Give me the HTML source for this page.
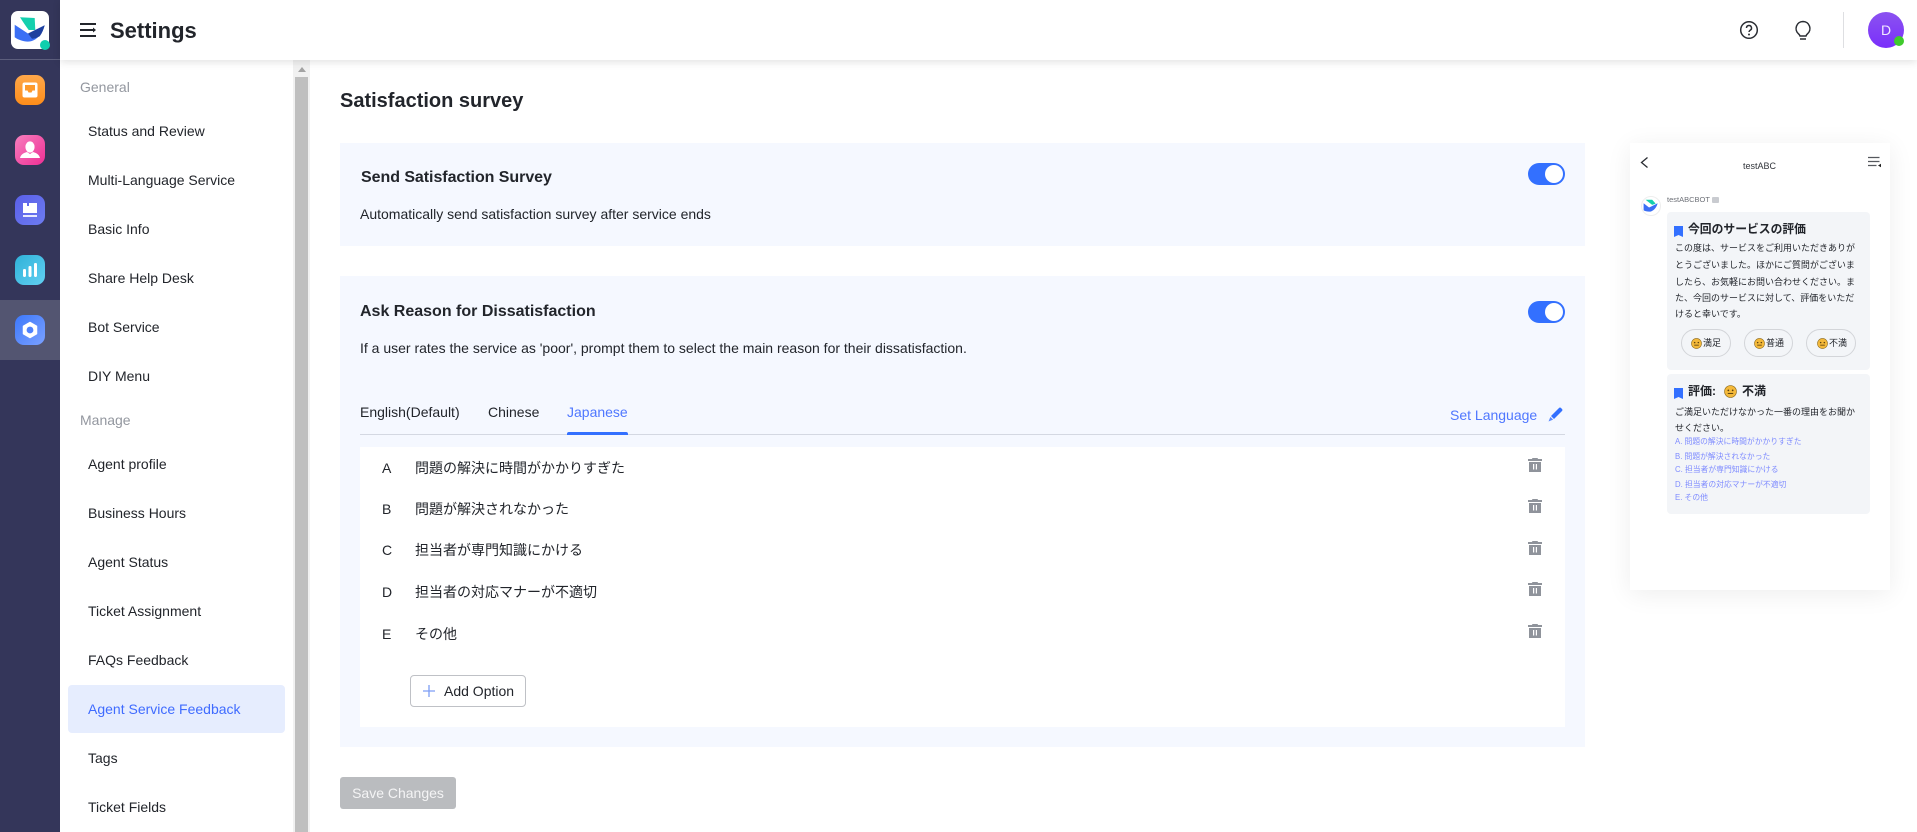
<!DOCTYPE html>
<html><head><meta charset="utf-8"><title>Settings</title>
<style>
*{box-sizing:border-box}
html,body{margin:0;padding:0;width:1917px;height:832px;overflow:hidden;background:#fff;font-family:"Liberation Sans","Noto Sans CJK JP",sans-serif;color:#22252b}
.a{position:absolute;white-space:nowrap}
.m{position:absolute;left:88px;font-size:14px;line-height:20px;color:#22252b;white-space:nowrap}
.g{position:absolute;left:80px;font-size:14px;line-height:20px;color:#93979f}
.ico{position:absolute;left:15px;width:30px;height:30px;border-radius:9px}
.l{position:absolute;left:382px;font-size:14px;line-height:20px;color:#22252b}
.t{position:absolute;left:415px;font-size:14px;line-height:20px;color:#22252b;white-space:nowrap}
.tog{position:absolute;left:1528px;width:37px;height:22px;border-radius:11px;background:#3370ff}
.tog:after{content:"";position:absolute;right:2px;top:2px;width:18px;height:18px;border-radius:50%;background:#fff}
.tr{position:absolute;left:1528px;width:14px;height:14px}
.j{font-size:9px;line-height:16px;position:absolute;color:#22252b;white-space:nowrap}
.o{font-size:7.800px;line-height:12px;position:absolute;color:#7f8cff;white-space:nowrap}
.pill{position:absolute;top:329px;width:50px;height:28px;border:1px solid #d3d5d9;border-radius:14px}
</style></head><body>
<div class="a" style="left:0;top:0;width:60px;height:832px;background:#34365a"></div>
<div class="a" style="left:0;top:59px;width:60px;height:1px;background:#5c5e7c"></div>
<div class="a" style="left:11px;top:11px;width:38px;height:38px;background:#fff;border-radius:7px"></div>
<svg class="a" style="left:11px;top:11px" width="40" height="40" viewBox="0 0 40 40"><path d="M9 6.300L23.700 7l.6 12h-6.600C14.500 15 11.500 10 9 6.300z" fill="#14cfae"/><path d="M3.700 13.700L17.700 23l16-8.700C31 23 26 29 20 30.300c-5.500 1-11.500-.6-16.300-4z" fill="#3b6ff5"/><path d="M17 22.500l16.700-8.200c-1 4-2.700 8-5 11-2.500 1.500-5 2.200-7.700 2.500z" fill="#1d3f9f"/></svg>
<div class="a" style="left:40px;top:40px;width:10px;height:10px;border-radius:50%;background:#0fcfae"></div>
<div class="a" style="left:0;top:300px;width:60px;height:60px;background:#535571"></div>
<div class="ico" style="top:75px;background:linear-gradient(#ffa84a,#fd8d1a)"></div>
<svg class="a" style="left:22px;top:82px" width="16" height="16" viewBox="0 0 16 16"><rect x=".500" y=".500" width="15" height="15" rx="2" fill="#fff"/><path d="M3 3h10v5.500h-2.500L9.500 10.500h-3L5.500 8.500H3z" fill="#fd9a2e"/></svg>
<div class="ico" style="top:135px;background:linear-gradient(135deg,#f77fbe,#ee2f95)"></div>
<svg class="a" style="left:20px;top:141px" width="20" height="18" viewBox="0 0 20 18"><ellipse cx="10" cy="6" rx="4.600" ry="5.600" fill="#fff"/><path d="M0 17c1-4 4-5 7-6l3 2 3-2c3 1 6 2 7 6z" fill="#fff"/></svg>
<div class="ico" style="top:195px;background:linear-gradient(135deg,#5a5fe8,#6d7cf0)"></div>
<svg class="a" style="left:22px;top:202px" width="16" height="16" viewBox="0 0 16 16"><path d="M1 1h4v3h2V1h8v10H1z" fill="#fff"/><path d="M1 13h14v2H1z" fill="#e8eaff"/></svg>
<div class="ico" style="top:255px;background:linear-gradient(135deg,#2fb1d8,#62d0f2)"></div>
<svg class="a" style="left:22px;top:262px" width="16" height="16" viewBox="0 0 16 16"><rect x="1" y="7" width="3" height="8" rx="1.200" fill="#fff"/><rect x="6.500" y="4" width="3" height="11" rx="1.200" fill="#fff"/><rect x="12" y="1" width="3" height="14" rx="1.200" fill="#fff"/></svg>
<div class="ico" style="top:315px;background:linear-gradient(135deg,#3d78fb,#7aa0ff)"></div>
<svg class="a" style="left:21px;top:321px" width="18" height="18" viewBox="0 0 18 18"><path d="M9 1.500l6.500 3.750v7.500L9 16.500l-6.500-3.750v-7.500z" fill="#fff" stroke="#fff" stroke-width="1.500" stroke-linejoin="round"/><circle cx="9" cy="9" r="3.400" fill="#4f82fc"/></svg>

<div class="a" style="left:60px;top:0;width:1857px;height:60px;background:#fff;box-shadow:0 2px 8px rgba(0,0,0,.12);z-index:5"></div>
<svg class="a" style="left:80px;top:23px;z-index:6" width="16" height="15" viewBox="0 0 16 15"><path d="M0 1h16M0 7h14M0 13h16" stroke="#22252b" stroke-width="2"/><path d="M13 4.500L16 7l-3 2.500z" fill="#22252b"/></svg>
<div class="a" style="left:110px;top:17px;font-size:22px;line-height:28px;font-weight:700;color:#22252b;z-index:6">Settings</div>
<svg class="a" style="left:1739px;top:20px;z-index:6" width="20" height="20" viewBox="0 0 20 20"><circle cx="10" cy="10" r="8.300" fill="none" stroke="#2a2d33" stroke-width="1.500"/><path d="M7.500 8a2.500 2.500 0 1 1 3.700 2.200c-.8.500-1.200 1-1.200 1.800" fill="none" stroke="#2a2d33" stroke-width="1.500"/><circle cx="10" cy="14.500" r="1" fill="#2a2d33"/></svg>
<svg class="a" style="left:1794px;top:20px;z-index:6" width="18" height="21" viewBox="0 0 18 21"><path d="M9 1.500a7 7 0 0 0-4.500 12.300c.8.700 1.200 1.300 1.500 2.200h6c.3-.9.700-1.500 1.500-2.200A7 7 0 0 0 9 1.500z" fill="none" stroke="#2a2d33" stroke-width="1.500"/><path d="M6 19h6" stroke="#2a2d33" stroke-width="1.500"/></svg>
<div class="a" style="left:1843px;top:12px;width:1px;height:36px;background:#dedfe2;z-index:6"></div>
<div class="a" style="left:1868px;top:12px;width:36px;height:36px;border-radius:50%;background:linear-gradient(#8b52f0,#7a2ffb);color:#f1e8ff;font-size:14px;line-height:36px;text-align:center;z-index:6">D</div>
<div class="a" style="left:1894px;top:36px;width:10px;height:10px;border-radius:50%;background:#3fca2c;z-index:7"></div>

<div class="g" style="top:77px">General</div>
<div class="m" style="top:121px">Status and Review</div>
<div class="m" style="top:170px">Multi-Language Service</div>
<div class="m" style="top:219px">Basic Info</div>
<div class="m" style="top:268px">Share Help Desk</div>
<div class="m" style="top:317px">Bot Service</div>
<div class="m" style="top:366px">DIY Menu</div>
<div class="g" style="top:410px">Manage</div>
<div class="m" style="top:454px">Agent profile</div>
<div class="m" style="top:503px">Business Hours</div>
<div class="m" style="top:552px">Agent Status</div>
<div class="m" style="top:601px">Ticket Assignment</div>
<div class="m" style="top:650px">FAQs Feedback</div>
<div class="a" style="left:68px;top:685px;width:217px;height:48px;background:#e6edfe;border-radius:4px"></div>
<div class="m" style="top:699px;color:#3f6bff">Agent Service Feedback</div>
<div class="m" style="top:748px">Tags</div>
<div class="m" style="top:797px">Ticket Fields</div>

<div class="a" style="left:293px;top:60px;width:17px;height:772px;background:#f1f1f1"></div>
<div class="a" style="left:295px;top:77px;width:13px;height:755px;background:#bfbfbf"></div>
<div class="a" style="left:298px;top:67px;width:0;height:0;border:4px solid transparent;border-top:0;border-bottom:5px solid #a3a3a3"></div>

<div class="a" style="left:340px;top:89px;font-size:20px;line-height:24px;font-weight:700;color:#22252b">Satisfaction survey</div>

<div class="a" style="left:340px;top:143px;width:1245px;height:103px;background:#f5f8ff"></div>
<div class="a" style="left:361px;top:168px;font-size:16px;line-height:20px;font-weight:700;letter-spacing:-.05px">Send Satisfaction Survey</div>
<div class="tog" style="top:163px"></div>
<div class="a" style="left:360px;top:204px;font-size:14px;line-height:20px">Automatically send satisfaction survey after service ends</div>

<div class="a" style="left:340px;top:276px;width:1245px;height:471px;background:#f5f8ff"></div>
<div class="a" style="left:360px;top:302px;font-size:16px;line-height:20px;font-weight:700">Ask Reason for Dissatisfaction</div>
<div class="tog" style="top:301px"></div>
<div class="a" style="left:360px;top:338px;font-size:14px;line-height:20px">If a user rates the service as 'poor', prompt them to select the main reason for their dissatisfaction.</div>

<div class="a" style="left:360px;top:402px;font-size:14px;line-height:20px">English(Default)</div>
<div class="a" style="left:488px;top:402px;font-size:14px;line-height:20px">Chinese</div>
<div class="a" style="left:567px;top:402px;font-size:14px;line-height:20px;color:#4f77ff">Japanese</div>
<div class="a" style="left:360px;top:434px;width:1205px;height:1px;background:#d4d8e2"></div>
<div class="a" style="left:567px;top:432px;width:61px;height:3px;background:#3370ff;border-radius:2px 2px 0 0"></div>
<div class="a" style="left:1450px;top:405px;font-size:14px;line-height:20px;color:#4f77ff">Set Language</div>
<svg class="a" style="left:1548px;top:407px" width="15" height="15" viewBox="0 0 15 15"><path d="M3 9L11 1c.6-.6 1.400-.6 2 0l1 1c.6.6.6 1.400 0 2L6 12z" fill="#3370ff"/><path d="M.5 14.500l1.900-4.600 2.700 2.700z" fill="#5a8bff"/></svg>

<div class="a" style="left:360px;top:447px;width:1205px;height:280px;background:#fff"></div>
<div class="l" style="top:458px">A</div><div class="t" style="top:458px">問題の解決に時間がかかりすぎた</div>
<div class="l" style="top:499px">B</div><div class="t" style="top:499px">問題が解決されなかった</div>
<div class="l" style="top:540px">C</div><div class="t" style="top:540px">担当者が専門知識にかける</div>
<div class="l" style="top:582px">D</div><div class="t" style="top:582px">担当者の対応マナーが不適切</div>
<div class="l" style="top:624px">E</div><div class="t" style="top:624px">その他</div>
<svg width="0" height="0" style="position:absolute"><symbol id="tr" viewBox="0 0 14 14"><path d="M4.500 0h5l.6 1H14v2H0V1h3.900zM1 4h12v10H1z" fill="#8f939b"/><path d="M5 6h1.200v5.500H5zM7.800 6H9v5.500H7.800z" fill="#fff"/></symbol></svg>
<svg class="tr" style="top:458px"><use href="#tr"/></svg>
<svg class="tr" style="top:499px"><use href="#tr"/></svg>
<svg class="tr" style="top:541px"><use href="#tr"/></svg>
<svg class="tr" style="top:582px"><use href="#tr"/></svg>
<svg class="tr" style="top:624px"><use href="#tr"/></svg>

<div class="a" style="left:410px;top:675px;width:116px;height:32px;background:#fff;border:1px solid #bfc1c6;border-radius:4px"></div>
<svg class="a" style="left:422px;top:684px" width="14" height="14" viewBox="0 0 14 14"><path d="M7 1v12M1 7h12" stroke="#7d9df5" stroke-width="1.300"/></svg>
<div class="a" style="left:444px;top:681px;font-size:14px;line-height:20px">Add Option</div>

<div class="a" style="left:340px;top:777px;width:116px;height:32px;background:#babcbf;border-radius:3px;color:#f4f4f5;font-size:14px;line-height:32px;text-align:center">Save Changes</div>

<div class="a" style="left:1630px;top:143px;width:260px;height:447px;background:#fff;box-shadow:0 4px 24px rgba(0,0,0,.07)"></div>
<svg class="a" style="left:1640px;top:157px" width="9" height="11" viewBox="0 0 9 11"><path d="M7.500 .5L1.500 5.500l6 5" fill="none" stroke="#2a2d33" stroke-width="1.300"/></svg>
<div class="a" style="left:1743px;top:159px;font-size:9px;line-height:14px;color:#33363c">testABC</div>
<svg class="a" style="left:1868px;top:156px" width="14" height="12" viewBox="0 0 14 12"><path d="M0 1.500h11.500M0 5.500h11.500M0 9.500h8.500" stroke="#55585e" stroke-width="1.300"/><path d="M10 9.500l3-1.800v3.600z" fill="#222"/></svg>
<div class="a" style="left:1641px;top:196px;width:20px;height:20px;border-radius:50%;background:#fff;border:1px solid #eee"></div>
<svg class="a" style="left:1643px;top:199px" width="16" height="14" viewBox="0 0 40 36"><path d="M6 2h17l9 10-9 3z" fill="#14cfae"/><path d="M1 11l14 11 22-11c-2 10-9 18-17 21-6 1-15 0-19-3z" fill="#3b6ff5"/></svg>
<div class="a" style="left:1667px;top:194px;font-size:7.500px;line-height:12px;color:#6e7178">testABCBOT</div>
<div class="a" style="left:1712px;top:197px;width:7px;height:6px;border-radius:1px;background:#c9cbd0"></div>
<div class="a" style="left:1667px;top:212px;width:203px;height:158px;background:#f3f5f8;border-radius:4px"></div>
<svg class="a" style="left:1674px;top:226px" width="9" height="11" viewBox="0 0 9 11"><path d="M0 0h9v11L4.500 9 0 11z" fill="#3370ff"/></svg>
<div class="a" style="left:1688px;top:221px;font-size:11.800px;line-height:17px;font-weight:700;color:#22252b">今回のサービスの評価</div>
<div class="j" style="left:1675px;top:240px">この度は、サービスをご利用いただきありが</div>
<div class="j" style="left:1675px;top:257px">とうございました。ほかにご質問がございま</div>
<div class="j" style="left:1675px;top:274px">したら、お気軽にお問い合わせください。ま</div>
<div class="j" style="left:1675px;top:290px">た、今回のサービスに対して、評価をいただ</div>
<div class="j" style="left:1675px;top:306px">けると幸いです。</div>
<div class="pill" style="left:1681px"></div><div class="pill" style="left:1744px;width:49px"></div><div class="pill" style="left:1806px"></div>
<svg width="0" height="0" style="position:absolute"><symbol id="fa" viewBox="0 0 12 12"><circle cx="6" cy="6" r="5.500" fill="#f4b93a" stroke="#8d6a1c" stroke-width=".6"/><circle cx="4" cy="5" r=".8" fill="#5a4010"/><circle cx="8" cy="5" r=".8" fill="#5a4010"/><path d="M3.500 7.800h5" stroke="#5a4010" stroke-width=".9"/></symbol></svg>
<svg class="a" style="left:1691px;top:338px" width="11" height="11" viewBox="0 0 12 12"><use href="#fa"/></svg>
<div class="j" style="left:1703px;top:335px">満足</div>
<svg class="a" style="left:1754px;top:338px" width="11" height="11" viewBox="0 0 12 12"><use href="#fa"/></svg>
<div class="j" style="left:1766px;top:335px">普通</div>
<svg class="a" style="left:1817px;top:338px" width="11" height="11" viewBox="0 0 12 12"><use href="#fa"/></svg>
<div class="j" style="left:1829px;top:335px">不満</div>
<div class="a" style="left:1667px;top:374px;width:203px;height:140px;background:#f3f5f8;border-radius:4px"></div>
<svg class="a" style="left:1674px;top:388px" width="9" height="11" viewBox="0 0 9 11"><path d="M0 0h9v11L4.500 9 0 11z" fill="#3370ff"/></svg>
<div class="a" style="left:1688px;top:383px;font-size:12px;line-height:17px;font-weight:700;color:#22252b">評価:</div>
<svg class="a" style="left:1724px;top:385px" width="13" height="13" viewBox="0 0 12 12"><use href="#fa"/></svg>
<div class="a" style="left:1742px;top:383px;font-size:12px;line-height:17px;font-weight:700;color:#22252b">不満</div>
<div class="j" style="left:1675px;top:404px">ご満足いただけなかった一番の理由をお聞か</div>
<div class="j" style="left:1675px;top:420px">せください。</div>
<div class="o" style="left:1675px;top:436px">A. 問題の解決に時間がかかりすぎた</div>
<div class="o" style="left:1675px;top:451px">B. 問題が解決されなかった</div>
<div class="o" style="left:1675px;top:464px">C. 担当者が専門知識にかける</div>
<div class="o" style="left:1675px;top:479px">D. 担当者の対応マナーが不適切</div>
<div class="o" style="left:1675px;top:492px">E. その他</div>
</body></html>
